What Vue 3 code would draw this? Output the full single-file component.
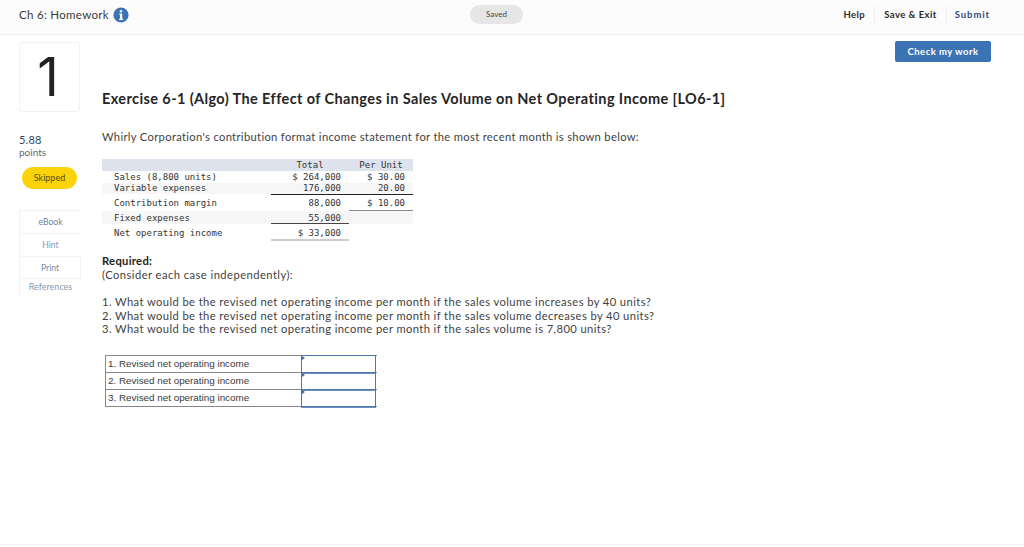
<script setup>
const rows = [
  { label: 'Sales (8,800 units)', total: '$ 264,000', unit: '$ 30.00', cls: 'r-sales' },
  { label: 'Variable expenses', total: '176,000', unit: '20.00', cls: 'r-var' },
  { label: 'Contribution margin', total: '88,000', unit: '$ 10.00', cls: 'r-cm' },
  { label: 'Fixed expenses', total: '55,000', unit: '', cls: 'r-fix' },
  { label: 'Net operating income', total: '$ 33,000', unit: '', cls: 'r-net' }
]
const answers = ['1. Revised net operating income', '2. Revised net operating income', '3. Revised net operating income']
const questions = [
  '1. What would be the revised net operating income per month if the sales volume increases by 40 units?',
  '2. What would be the revised net operating income per month if the sales volume decreases by 40 units?',
  '3. What would be the revised net operating income per month if the sales volume is 7,800 units?'
]
</script>

<template>
  <div class="page">
    <header class="top">
      <div class="top-left">
        <span class="crumb">Ch 6: Homework</span>
        <svg class="info" viewBox="0 0 16 16" width="16" height="16">
          <circle cx="8" cy="8" r="7.6" fill="#3b73b5" />
          <circle cx="8" cy="4.2" r="1.3" fill="#fff" />
          <path d="M6.3 6.6h2.9v5.2h1v1.2H6v-1.2h1.1V7.8H6.3z" fill="#fff" />
        </svg>
      </div>
      <div class="saved">Saved</div>
      <nav class="top-right">
        <span class="nav nav-help">Help</span>
        <span class="nav nav-save">Save &amp; Exit</span>
        <span class="nav nav-submit">Submit</span>
      </nav>
    </header>

    <div class="body">
      <aside class="side">
        <div class="num">1</div>
        <div class="pts">5.88</div>
        <div class="pts-label">points</div>
        <div class="skipped">Skipped</div>
        <div class="tabs">
          <div class="tab t-ebook">eBook</div>
          <div class="tab t-hint">Hint</div>
          <div class="tab t-print">Print</div>
          <div class="tab t-ref">References</div>
        </div>
      </aside>

      <main class="content">
        <div class="check-row"><button class="check">Check my work</button></div>
        <h1 class="title">Exercise 6-1 (Algo) The Effect of Changes in Sales Volume on Net Operating Income [LO6-1]</h1>
        <p class="intro">Whirly Corporation's contribution format income statement for the most recent month is shown below:</p>

        <div class="stmt">
          <div class="s-row s-head">
            <span class="c-label"></span>
            <span class="c-total center">Total</span>
            <span class="c-unit center">Per Unit</span>
          </div>
          <div v-for="r in rows" :key="r.label" class="s-row" :class="r.cls">
            <span class="c-label">{{ r.label }}</span>
            <span class="c-total">{{ r.total }}</span>
            <span class="c-unit">{{ r.unit }}</span>
          </div>
        </div>

        <p class="req"><strong>Required:</strong><br />(Consider each case independently):</p>
        <ol class="qs">
          <li v-for="q in questions" :key="q">{{ q }}</li>
        </ol>

        <div class="answers">
          <div v-for="a in answers" :key="a" class="a-row">
            <div class="a-label">{{ a }}</div>
            <div class="a-input"></div>
          </div>
        </div>
      </main>
    </div>
    <div class="foot"></div>
  </div>
</template>

<style>
html, body { margin: 0; background: #fff; }
</style>

<style scoped>
.page {
  width: 1024px;
  height: 547px;
  overflow: hidden;
  position: relative;
  font-family: "Lato", "Open Sans", sans-serif;
  color: #2b2b2b;
  display: flex;
  flex-direction: column;
}
.top {
  flex: none;
  box-sizing: content-box;
  background: #fcfcfc;
  border-bottom: 1px solid #f0f0f0;
  display: grid;
  grid-template-columns: 451px 53px 1fr;
  align-items: center;
  padding: 0 34px 5px 19px;
  height: 29px;
}
.top-left { display: flex; align-items: center; gap: 4px; }
.crumb { font-size: 11.5px; letter-spacing: 0.3px; color: #3a3a3a; }
.info { display: block; }
.saved {
  width: 53px;
  height: 19px;
  border-radius: 10px;
  background: #e6e6e6;
  font-size: 8px;
  line-height: 19px;
  text-align: center;
  color: #444;
}
.top-right { display: flex; justify-content: flex-end; align-items: center; }
.nav { font-size: 9.5px; font-weight: 700; letter-spacing: 0.45px; line-height: 20px; }
.nav-help { padding-right: 9px; border-right: 1px solid #f0f0f0; color: #2a2a2a; }
.nav-save { padding: 0 9px 0 9px; border-right: 1px solid #f0f0f0; color: #2a2a2a; }
.nav-submit { padding-left: 8px; color: #2f4a78; letter-spacing: 0.9px; }

.body { display: flex; flex: 1; min-height: 0; }
.side { width: 83px; flex: none; padding: 7px 0 0 19px; box-sizing: border-box; }
.num {
  width: 61px;
  height: 70px;
  box-sizing: border-box;
  border: 1px solid #f1f1f1;
  border-radius: 3px;
  padding-right: 3px;
  font-family: "Inter", sans-serif;
  font-size: 53px;
  line-height: 68px;
  text-align: center;
  color: #222;
  font-weight: 400;
}
.pts { margin-top: 21px; font-size: 11px; line-height: 13px; color: #2f4468; letter-spacing: 0.2px; }
.pts-label { font-size: 10px; line-height: 13px; margin-top: 0; color: #6a6a6a; }
.skipped {
  width: 55px;
  height: 22px;
  margin: 8px 0 0 3px;
  border-radius: 11px;
  background: #fbd30b;
  font-size: 9px;
  line-height: 22px;
  text-align: center;
  color: #5c4b10;
}
.tabs { margin-top: 21px; width: 61px; border-top: 1px solid #f1f1f1; border-left: 1px solid #f1f1f1; }
.tab { font-size: 8.6px; text-align: center; color: #6d80a0; }
.t-ebook { height: 22px; line-height: 22px; border-bottom: 1px solid #f1f1f1; }
.t-hint { height: 22px; line-height: 22px; color: #8899b0; }
.t-print { height: 21px; line-height: 22px; border-top: 1px solid #f4f4f4; border-bottom: 1px solid #f1f1f1; border-right: 1px solid #f1f1f1; color: #7a8aa3; }
.t-ref { height: 18px; line-height: 16px; font-size: 9px; color: #8899b0; }

.content { flex: 1; padding: 6px 33px 0 19px; min-width: 0; }
.check-row { display: flex; justify-content: flex-end; height: 21px; }
.check {
  width: 96px;
  height: 21px;
  border: 0;
  padding: 0;
  border-radius: 2px;
  background: #3b73b5;
  color: #fff;
  font: 700 9.5px "Lato", sans-serif;
  letter-spacing: 0.45px;
}
.title {
  margin: 28px 0 0;
  font-size: 14.5px;
  line-height: 18px;
  font-weight: 700;
  letter-spacing: 0.39px;
  color: #262626;
  white-space: nowrap;
}
.intro { margin: 22px 0 0; font-size: 11.2px; line-height: 14px; letter-spacing: 0.33px; color: #3f3f3f; white-space: nowrap; }

.stmt {
  margin-top: 15px;
  width: 311px;
  font-family: "DejaVu Sans Mono", monospace;
  font-size: 9px;
  color: #333;
}
.s-row { display: grid; grid-template-columns: 169px 78px 64px; }
.c-label { padding-left: 12px; }
.c-total, .c-unit { text-align: right; padding-right: 8px; }
.center { text-align: center; padding-right: 0; }
.s-head { height: 12px; line-height: 12px; background: #dde2ec; }
.r-sales { height: 12px; line-height: 12px; }
.r-var { height: 11px; line-height: 11px; background: #f6f6f6; }
.r-var .c-total, .r-var .c-unit { border-bottom: 1px solid #222; }
.r-cm { height: 17px; line-height: 18px; }
.r-cm .c-unit { border-bottom: 1px solid #888; height: 16px; }
.r-fix { height: 13px; line-height: 14px; background: #f6f6f6; }
.r-fix .c-total { border-bottom: 1px solid #444; height: 12px; }
.r-net { height: 17px; line-height: 18px; }
.r-net .c-total { border-bottom: 2px solid #ccc; height: 15px; }

.req { margin: 13px 0 0; font-size: 11.2px; line-height: 14px; letter-spacing: 0.45px; color: #3f3f3f; }
.req strong { color: #222; letter-spacing: 0.3px; }
.qs { list-style: none; margin: 13px 0 0; padding: 0; font-size: 11.2px; line-height: 13.5px; letter-spacing: 0.4px; color: #3f3f3f; white-space: nowrap; }

.answers { margin: 19px 0 0 3px; width: 271px; border-top: 1px solid #888; border-left: 1px solid #888; }
.a-row { display: grid; grid-template-columns: 195px 75px; height: 16px; border-bottom: 1px solid #888; }
.a-label { font-family: "Liberation Sans", Arial, sans-serif; font-size: 9.85px; line-height: 16px; padding-left: 2px; color: #3a3a3a; white-space: nowrap; }
.a-input { position: relative; border: 1px solid #4f76a8; box-shadow: 0 1px 0 #6f90b8; margin-top: -1px; height: 16px; box-sizing: content-box; }
.a-input::before {
  content: "";
  position: absolute;
  left: 0;
  top: 0;
  border-left: 3px solid #3f6ea8;
  border-top: 2px solid transparent;
  border-bottom: 2px solid transparent;
}
.foot { position: absolute; left: 0; right: 0; bottom: 2px; height: 1px; background: #f4f4f4; }
</style>
